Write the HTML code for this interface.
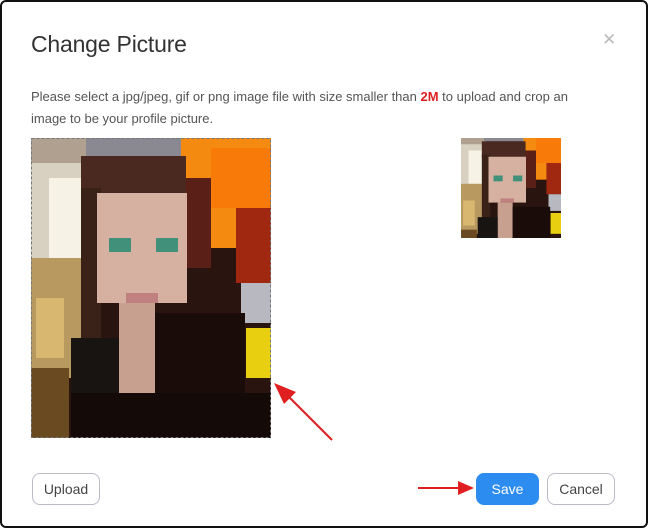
<!DOCTYPE html>
<html><head><meta charset="utf-8"><style>
*{margin:0;padding:0;box-sizing:border-box}
html,body{width:648px;height:528px;overflow:hidden;background:#fff;font-family:"Liberation Sans",sans-serif}
.frame{position:absolute;left:0;top:0;width:648px;height:528px;border:2px solid #111;border-radius:6px;background:#fff}
.title{position:absolute;left:31px;top:31px;font-size:23px;color:#333;letter-spacing:-0.2px}
.close{position:absolute;left:602px;top:30px;font-size:17px;color:#bbb}
.desc{position:absolute;left:31px;top:86px;width:560px;font-size:13px;line-height:22px;color:#555}
.desc b{color:#e02020;font-weight:bold}
.btn{position:absolute;top:473px;height:32px;border:1px solid #bbc;border-radius:8px;font-size:14px;color:#444;text-align:center;line-height:30px}
</style></head><body>
<div class="frame"></div>
<div class="title">Change Picture</div>
<div class="close">✕</div>
<div class="desc">Please select a jpg/jpeg, gif or png image file with size smaller than <b>2M</b> to upload and crop an image to be your profile picture.</div>

<svg style="position:absolute;left:0;top:0" width="0" height="0"><defs>
<g id="pic">
<rect x="0" y="0" width="240" height="300" fill="#2a1410"/>
<rect x="0" y="0" width="60" height="130" fill="#d8d0c0"/>
<rect x="18" y="40" width="32" height="80" fill="#f6f2e6"/>
<rect x="0" y="0" width="60" height="25" fill="#b0a090"/>
<rect x="0" y="120" width="55" height="120" fill="#b89a60"/>
<rect x="5" y="160" width="28" height="60" fill="#d8b870"/>
<rect x="0" y="230" width="38" height="70" fill="#6a4a20"/>
<rect x="55" y="0" width="100" height="18" fill="#8a8890"/>
<rect x="150" y="0" width="90" height="110" fill="#f48a10"/>
<rect x="180" y="10" width="60" height="60" fill="#f87a08"/>
<rect x="150" y="40" width="30" height="90" fill="#5a2018"/>
<rect x="205" y="70" width="35" height="75" fill="#a02810"/>
<rect x="210" y="145" width="30" height="40" fill="#b8b8c0"/>
<rect x="215" y="190" width="25" height="50" fill="#e8d010"/>
<rect x="50" y="18" width="105" height="40" fill="#4a2a20"/>
<rect x="50" y="50" width="20" height="180" fill="#3a2218"/>
<rect x="66" y="55" width="90" height="110" fill="#d6b0a0"/>
<rect x="78" y="100" width="22" height="14" fill="#40907a"/>
<rect x="125" y="100" width="22" height="14" fill="#40907a"/>
<rect x="95" y="155" width="32" height="10" fill="#c08080"/>
<rect x="88" y="165" width="36" height="100" fill="#c8a090"/>
<rect x="40" y="200" width="48" height="100" fill="#181412"/>
<rect x="124" y="175" width="90" height="125" fill="#1a0c08"/>
<rect x="40" y="255" width="200" height="45" fill="#140a08"/>
</g></defs></svg>

<svg style="position:absolute;left:31px;top:138px" width="240" height="300" viewBox="0 0 240 300"><use href="#pic"/>
<rect x="0.5" y="0.5" width="239" height="299" fill="none" stroke="#777" stroke-dasharray="3,2" stroke-width="1"/></svg>
<svg style="position:absolute;left:461px;top:138px" width="100" height="100" viewBox="0 10 240 240"><use href="#pic"/></svg>

<svg style="position:absolute;left:0;top:0" width="648" height="528">
<line x1="332" y1="440" x2="285" y2="393" stroke="#e02020" stroke-width="2"/>
<polygon points="274,383 296,392 284,404" fill="#e02020"/>
<line x1="418" y1="488" x2="460" y2="488" stroke="#e02020" stroke-width="2"/>
<polygon points="474,488 458,481 458,495" fill="#e02020"/>
</svg>

<div class="btn" style="left:32px;width:68px">Upload</div>
<div class="btn" style="left:476px;width:63px;background:#2d8cf0;border-color:#2d8cf0;color:#fff">Save</div>
<div class="btn" style="left:547px;width:68px">Cancel</div>
</body></html>
